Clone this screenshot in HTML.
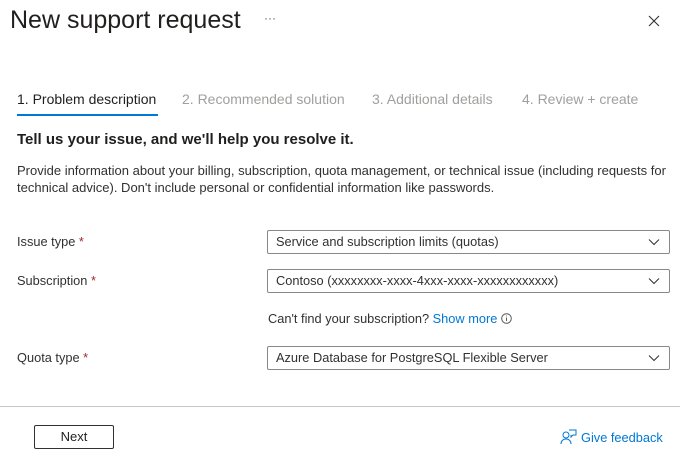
<!DOCTYPE html><html><head><style>
body{margin:0;width:680px;height:460px;background:#fff;font-family:"Liberation Sans",sans-serif;color:#323130;position:relative;overflow:hidden}
.a{position:absolute;white-space:nowrap}
.dd{position:absolute;left:267px;height:22px;border:1px solid #8a8886;border-radius:2px;font-size:12.8px;line-height:22px;padding-left:8px;box-sizing:content-box;width:393px}
.dd svg{position:absolute;right:9px;top:7px}
.lb{font-size:12.8px}
.req{color:#a4262c}
.t{font-size:14px;top:91px}
</style></head><body>
<div class="a" style="left:10px;top:6px;font-size:25px;color:#201f1e">New support request</div>
<div class="a" style="left:264px;top:11px;font-size:12px;color:#605e5c">···</div>
<svg class="a" style="left:648px;top:15px" width="12" height="12" viewBox="0 0 12 12"><path d="M1 1L11 11M11 1L1 11" stroke="#323130" stroke-width="1.1"/></svg>
<div class="a t" style="left:17px;color:#201f1e">1. Problem description</div>
<div class="a" style="left:17px;top:114px;width:141px;height:2px;background:#0078d4"></div>
<div class="a t" style="left:182px;color:#a19f9d">2. Recommended solution</div>
<div class="a t" style="left:372px;color:#a19f9d">3. Additional details</div>
<div class="a t" style="left:522px;color:#a19f9d">4. Review + create</div>
<div class="a" style="left:17px;top:131px;font-size:15px;font-weight:bold;color:#201f1e">Tell us your issue, and we'll help you resolve it.</div>
<div class="a" style="left:17px;top:162px;font-size:13px;line-height:17px;color:#323130">Provide information about your billing, subscription, quota management, or technical issue (including requests for<br>technical advice). Don't include personal or confidential information like passwords.</div>
<div class="a lb" style="left:17px;top:234px">Issue type <span class="req">*</span></div>
<div class="a lb" style="left:17px;top:273px">Subscription <span class="req">*</span></div>
<div class="a lb" style="left:17px;top:350px">Quota type <span class="req">*</span></div>
<div class="dd" style="top:230px">Service and subscription limits (quotas)<svg width="12" height="8" viewBox="0 0 12 8"><path d="M1 1.5L6 6.5L11 1.5" stroke="#323130" fill="none"/></svg></div>
<div class="dd" style="top:269px">Contoso (xxxxxxxx-xxxx-4xxx-xxxx-xxxxxxxxxxxx)<svg width="12" height="8" viewBox="0 0 12 8"><path d="M1 1.5L6 6.5L11 1.5" stroke="#323130" fill="none"/></svg></div>
<div class="a" style="left:268px;top:311px;font-size:12.8px">Can't find your subscription? <span style="color:#0078d4">Show more</span> <svg width="11" height="11" viewBox="0 0 11 11" style="vertical-align:-1px"><circle cx="5.5" cy="5.5" r="4.8" stroke="#605e5c" fill="none"/><path d="M5.5 4.5V8M5.5 2.6V3.4" stroke="#605e5c"/></svg></div>
<div class="dd" style="top:346px">Azure Database for PostgreSQL Flexible Server<svg width="12" height="8" viewBox="0 0 12 8"><path d="M1 1.5L6 6.5L11 1.5" stroke="#323130" fill="none"/></svg></div>
<div class="a" style="left:0;top:406px;width:680px;height:1px;background:#c8c6c4"></div>
<div class="a" style="left:34px;top:425px;width:78px;height:22px;border:1px solid #323130;border-radius:2px;text-align:center;line-height:22px;font-size:13px;color:#201f1e">Next</div>
<svg class="a" style="left:560px;top:429px" width="17" height="16" viewBox="0 0 17 16"><circle cx="6" cy="6" r="3" stroke="#0078d4" fill="none"/><path d="M1 15c0-3 2-5 5-5s5 2 5 5" stroke="#0078d4" fill="none"/><path d="M9 1h7v5h-3l-2 2V6" stroke="#0078d4" fill="none"/></svg>
<div class="a" style="left:581px;top:430px;font-size:12.8px;color:#0078d4">Give feedback</div>
</body></html>
